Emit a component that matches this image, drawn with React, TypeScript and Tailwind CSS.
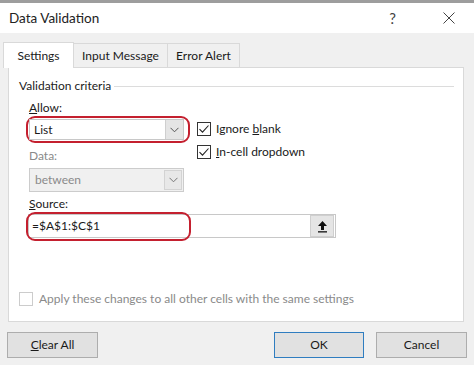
import React from 'react';

function Chevron({ color = '#555' }: { color?: string }) {
  return (
    <svg width="9" height="6" viewBox="0 0 9 6" fill="none">
      <path d="M0.5 0.8 L4.5 4.8 L8.5 0.8" stroke={color} strokeWidth="1" />
    </svg>
  );
}

function Check({ checked, disabled }: { checked?: boolean; disabled?: boolean }) {
  return (
    <div
      className={`w-[14px] h-[14px] border flex items-center justify-center bg-white ${
        disabled ? 'border-[#cccccc]' : 'border-[#333333]'
      }`}
    >
      {checked && (
        <svg width="12" height="12" viewBox="0 0 12 12" fill="none">
          <path d="M1.5 6.2 L4.5 9.2 L10.5 2.5" stroke="#222" strokeWidth="1.1" />
        </svg>
      )}
    </div>
  );
}

export default function App() {
  return (
    <div
      className="w-[474px] h-[365px] bg-[#f0f0f0] flex flex-col overflow-hidden text-[#1a1a1a]"
      style={{ fontFamily: 'Lato, "Noto Sans", sans-serif' }}
    >
      {/* top edge */}
      <div className="h-[3px] bg-[#9d9d9d]" />

      {/* Title bar */}
      <div className="h-[30px] bg-white flex items-center pl-[9px] pr-[19px]">
        <span className="text-[13.5px] text-[#222]">Data Validation</span>
        <span className="ml-auto text-[15px] text-[#444] mr-[47px]">?</span>
        <svg width="12" height="12" viewBox="0 0 12 12" fill="none">
          <path d="M0.5 0.5 L11.5 11.5 M11.5 0.5 L0.5 11.5" stroke="#444" strokeWidth="1" />
        </svg>
      </div>

      {/* Tabs */}
      <div className="flex items-end pl-[3px] mt-[9px] h-[25px]">
        <div className="w-[71px] h-[26px] bg-white border border-b-0 border-[#d9d9d9] flex items-center justify-center text-[12px] relative z-10 -mb-px">
          Settings
        </div>
        <div className="w-[94px] h-[24px] bg-[#f0f0f0] border border-l-0 border-b-0 border-[#d9d9d9] flex items-center justify-center text-[12px]">
          Input Message
        </div>
        <div className="w-[72px] h-[24px] bg-[#f0f0f0] border border-l-0 border-b-0 border-[#d9d9d9] flex items-center justify-center text-[12px]">
          Error Alert
        </div>
      </div>

      {/* Panel */}
      <div className="mx-[8px] w-[456px] h-[255px] bg-white border border-[#d9d9d9] flex flex-col pl-[10px] pr-[9px] text-[12px]">
        {/* group header */}
        <div className="flex items-center mt-[9px] h-[18px]">
          <span className="text-[#222]">Validation criteria</span>
          <div className="flex-1 h-px bg-[#dcdcdc] ml-[3px]" />
        </div>

        <div className="flex pl-[10px] mt-[5px]">
          <div className="flex flex-col w-[160px]">
            <span className="leading-[16px]">
              <u>A</u>llow:
            </span>
            {/* List combo */}
            <div className="mt-0 -ml-[3px] w-[164px] h-[27px] border-[2.5px] border-[#c4202f] rounded-[9px] flex items-center">
              <div className="flex-1 h-[21px] ml-[1px] mr-[4px] border border-[#c8c8c8] flex items-center bg-white">
                <span className="pl-[4px] flex-1">List</span>
                <div className="w-[18px] h-full bg-[#e5e5e5] border-l border-[#cfcfcf] flex items-center justify-center">
                  <Chevron />
                </div>
              </div>
            </div>
            <span className="leading-[16px] text-[#8a8a8a] mt-[5px]">Data:</span>
            <div className="mt-[4px] w-[155px] h-[24px] border border-[#cccccc] bg-[#f0f0f0] flex items-center">
              <span className="pl-[5px] flex-1 text-[#8a8a8a]">between</span>
              <div className="w-[18px] h-[20px] mr-[1px] bg-[#e8e8e8] border border-[#d3d3d3] flex items-center justify-center">
                <Chevron color="#777" />
              </div>
            </div>
          </div>

          <div className="flex flex-col ml-[8px] mt-[22px] gap-[9px]">
            <div className="flex items-center gap-[5px]">
              <Check checked />
              <span className="leading-[14px]">
                Ignore <u>b</u>lank
              </span>
            </div>
            <div className="flex items-center gap-[5px]">
              <Check checked />
              <span className="leading-[14px]">
                <u>I</u>n-cell dropdown
              </span>
            </div>
          </div>
        </div>

        {/* Source */}
        <div className="flex flex-col pl-[10px] mt-[4px]">
          <span className="leading-[16px]">
            <u>S</u>ource:
          </span>
          <div className="flex items-center mt-[2px] -ml-[3px]">
            <div className="relative w-[308px] h-[24px] ml-[2px] border border-[#c8c8c8] flex items-center bg-white">
              <span className="pl-[3px] flex-1">=$A$1:$C$1</span>
              <div className="w-[24px] h-[22px] bg-[#e5e5e5] border border-[#cfcfcf] mr-px flex items-center justify-center">
                <svg width="11" height="13" viewBox="0 0 11 13">
                  <path d="M5.5 1 L10 6 L7 6 L7 10 L4 10 L4 6 L1 6 Z" fill="#111" />
                  <rect x="1" y="11.2" width="9" height="1.3" fill="#111" />
                </svg>
              </div>
              <div className="absolute -left-[3px] -top-[3px] w-[165px] h-[29px] border-[2.5px] border-[#c4202f] rounded-[9px]" />
            </div>
          </div>
        </div>

        {/* Apply */}
        <div className="flex items-center mt-auto mb-[13px] gap-[6px]">
          <Check disabled />
          <span className="text-[#8a8a8a]">
            Apply these changes to all other cells with the same settings
          </span>
        </div>
      </div>

      {/* Buttons */}
      <div className="flex mt-[10px] px-[7px] text-[12px]">
        <button className="w-[91px] h-[26px] bg-[#e1e1e1] border border-[#adadad]">
          <u>C</u>lear All
        </button>
        <button className="ml-auto w-[90px] h-[26px] bg-[#e1e1e1] border-[1.5px] border-[#2f7dc0]">
          OK
        </button>
        <button className="ml-[12px] w-[91px] h-[26px] bg-[#e1e1e1] border border-[#adadad]">
          Cancel
        </button>
      </div>
    </div>
  );
}
